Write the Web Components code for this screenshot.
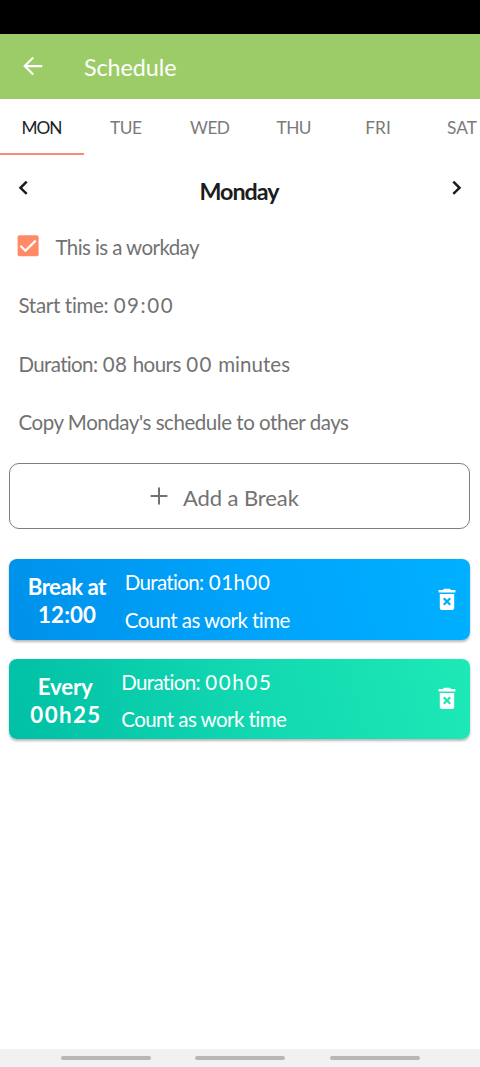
<!DOCTYPE html>
<html lang="en">
<head>
<meta charset="utf-8">
<title>Schedule</title>
<style>
html,body{margin:0;height:100%;background:#fff}
body{font-family:Lato,"Open Sans",sans-serif;color:#727272;overflow:hidden}
</style>
</head>
<body>
<schedule-screen></schedule-screen>
<script>
function define(name, html, setup) {
  const t = document.createElement('template');
  t.innerHTML = html;
  customElements.define(name, class extends HTMLElement {
    connectedCallback() {
      if (this.shadowRoot) return;
      this.attachShadow({ mode: 'open' }).appendChild(t.content.cloneNode(true));
      if (setup) setup(this, this.shadowRoot);
    }
  });
}

// A single line whose tracking is adjusted to reach the width in its "w" attribute.
define('fit-text', `<style>:host{display:inline-block;white-space:pre;flex:none}</style><slot></slot>`, el => {
  const w = +el.getAttribute('w');
  const natural = el.getBoundingClientRect().width;
  const n = el.textContent.length;
  if (w && natural) {
    const ls = (w - natural) / (n - 1);
    el.style.letterSpacing = ls + 'px';
    el.style.marginRight = -ls + 'px';
  }
});

define('app-bar', `<style>
:host{display:flex;align-items:center;box-sizing:border-box;height:65.5px;padding:2px 0 0 20px;background:#9ccc68;color:#fff;font-size:23.3px;line-height:30px}
svg{width:26px;height:26px;margin:0 38px 3px 0}
</style><svg viewBox="0 0 26 26" fill="none" stroke="#fff" stroke-width="2.1"><path d="M22.3 13.1H5M13.2 4.6L4.7 13.1l8.5 8.5"/></svg><slot></slot>`);

define('day-tab', `<style>
:host{display:flex;flex:none;width:84px;height:56px;box-sizing:border-box;justify-content:center;align-items:center;padding-top:3px;border-bottom:2px solid transparent;font-size:17.3px;line-height:24px;color:#7a7a7a}
:host([active]){color:#222;border-color:#fa8c6e}
</style><slot></slot>`);

define('tab-strip', `<style>:host{display:flex;height:56px;overflow:hidden}</style><slot></slot>`);

define('day-header', `<style>
:host{display:flex;justify-content:space-between;height:62px;box-sizing:border-box;padding:21px 16px 0 15px;color:#1c1c1c;font-size:23.3px;font-weight:700;line-height:30px}
svg{width:18px;height:22px;margin-top:1px}
</style><svg viewBox="0 0 18 22" fill="none" stroke="#1c1c1c" stroke-width="2.5"><path d="M11.7 4.7L5.5 10.8l6.2 6.1"/></svg><slot></slot>
<svg viewBox="0 0 18 22" fill="none" stroke="#1c1c1c" stroke-width="2.5"><path d="M7.3 4.7l6.2 6.1-6.2 6.1"/></svg>`);

define('check-box', `<style>:host{display:block;width:22px;height:22px;margin:-3px 16.5px 0 -1.5px}svg{display:block}</style>
<svg width="22" height="22" viewBox="0 0 22 22"><rect x=".6" y=".3" width="21" height="21" rx="2" fill="#ff8a65"/><path d="M3.4 10.8l5 5L18.7 5.6" fill="none" stroke="#fff" stroke-width="2.2"/></svg>`);

define('setting-row', `<style>
:host{display:flex;align-items:center;height:58.33px;padding-left:18.5px;font-size:20.5px;line-height:26px}
</style><slot></slot>`);

define('add-button', `<style>
:host{display:flex;align-items:center;justify-content:flex-start;box-sizing:border-box;height:65.5px;margin:12px 9.6px 30.5px 9.4px;padding:3px 0 0 138.5px;border:1.4px solid #7e7e7e;border-radius:10px;font-size:22px;line-height:28px}
svg{width:20px;height:20px;margin:0 14px 3px 0}
</style><svg viewBox="0 0 20 20" stroke="#727272" stroke-width="2" fill="none"><path d="M10 1.6v16.8M1.6 10h16.8"/></svg><slot></slot>`);

define('break-card', `<style>
:host{display:flex;box-sizing:border-box;height:80.5px;margin:0 9.6px 18.7px 9.4px;border-radius:8px;color:#fff;background:linear-gradient(75deg,#0091ea,#00a3fb 52%,#00b0ff);box-shadow:0 1.5px 2.5px rgba(0,0,0,.28)}
:host([kind=repeat]){background:linear-gradient(75deg,#00bfa5,#12d8b1 52%,#1de9b6)}
.when{display:flex;flex-direction:column;align-items:center;width:115.3px;padding-top:14px;box-sizing:border-box;font-size:22.3px;font-weight:700;line-height:28px}
:host([kind=repeat]) .when{width:111.8px}
.info{display:flex;flex-direction:column;gap:9.3px;flex:1;padding-top:9px;align-items:flex-start;font-size:20.5px;line-height:28px}
svg{width:20px;height:24px;align-self:center;margin-right:13.5px;margin-top:1px}
</style><div class="when"><slot name="when"></slot></div><div class="info"><slot></slot></div>
<svg viewBox="0 0 20 24"><path fill="#fff" fill-rule="evenodd" d="M1.6 2h4.3L7.2.8h5.6L14.1 2h4.3v2.4H1.6zM2.8 6h14.4v14a2.1 2.1 0 0 1-2.1 2.1H4.9A2.1 2.1 0 0 1 2.8 20zM6 11.1l2.4 2.4L6 15.9l1.6 1.6L10 15.1l2.4 2.4 1.6-1.6-2.4-2.4 2.4-2.4-1.6-1.6-2.4 2.4-2.4-2.4z"/></svg>`);

define('nav-bar', `<style>
:host{display:flex;justify-content:space-between;box-sizing:border-box;height:18px;margin-top:auto;padding:7px 60.5px 0;background:#f1f1f1}
i{width:90px;height:4px;border-radius:2px;background:#b7b7b7}
</style><i></i><i></i><i></i>`);

define('schedule-screen', `<style>
:host{display:flex;flex-direction:column;height:1067px;width:480px;overflow:hidden}
.status{height:33.5px;background:#000}
.status,app-bar,tab-strip,day-header,setting-row,add-button,break-card,nav-bar{flex:none}
.line{display:flex}
</style>
<div class="status"></div>
<app-bar><fit-text w="92.5">Schedule</fit-text></app-bar>
<tab-strip>
<day-tab active><fit-text w="41">MON</fit-text></day-tab>
<day-tab><fit-text w="32">TUE</fit-text></day-tab>
<day-tab><fit-text w="40">WED</fit-text></day-tab>
<day-tab><fit-text w="35">THU</fit-text></day-tab>
<day-tab><fit-text w="25.5">FRI</fit-text></day-tab>
<day-tab><fit-text w="30">SAT</fit-text></day-tab>
</tab-strip>
<day-header><fit-text w="80">Monday</fit-text></day-header>
<setting-row style="margin-top:1px"><check-box></check-box><fit-text w="144">This is a workday</fit-text></setting-row>
<setting-row><fit-text w="95.5">Start time: </fit-text><fit-text w="59">09:00</fit-text></setting-row>
<setting-row><fit-text w="84.5">Duration: </fit-text><fit-text w="30">08 </fit-text><fit-text w="53.5">hours </fit-text><fit-text w="32">00 </fit-text><fit-text w="72">minutes</fit-text></setting-row>
<setting-row><fit-text w="330.5">Copy Monday's schedule to other days</fit-text></setting-row>
<add-button><fit-text w="116">Add a Break</fit-text></add-button>
<break-card><fit-text slot="when" w="78.5">Break at</fit-text><fit-text slot="when" w="58">12:00</fit-text><div class="line"><fit-text w="84.5">Duration: </fit-text><fit-text w="61">01h00</fit-text></div><fit-text w="166">Count as work time</fit-text></break-card>
<break-card kind="repeat"><fit-text slot="when" w="55">Every</fit-text><fit-text slot="when" w="70">00h25</fit-text><div class="line"><fit-text w="84.5">Duration: </fit-text><fit-text w="65.5">00h05</fit-text></div><fit-text w="166">Count as work time</fit-text></break-card>
<nav-bar></nav-bar>`);
</script>
</body>
</html>
